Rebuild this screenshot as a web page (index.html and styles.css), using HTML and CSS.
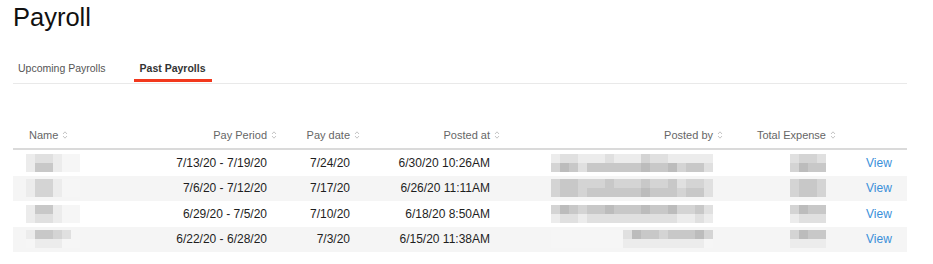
FILE: index.html
```html
<!DOCTYPE html>
<html lang="en">
<head>
<meta charset="utf-8">
<title>Payroll</title>
<link rel="stylesheet" href="styles.css">
</head>
<body>
<div class="page">
  <h1 class="title">Payroll</h1>
  <div class="tabs">
    <div class="tab">Upcoming Payrolls</div>
    <div class="tab active">Past Payrolls</div>
  </div>
  <table class="grid">
    <colgroup>
      <col class="c1"><col class="c2"><col class="c3"><col class="c4"><col class="c5"><col class="c6"><col class="c7">
    </colgroup>
    <thead>
      <tr>
        <th class="left">Name<svg class="sort" viewBox="0 0 6 10"><path d="M1 4 L3 1.8 L5 4 M1 6 L3 8.2 L5 6"/></svg></th>
        <th>Pay Period<svg class="sort" viewBox="0 0 6 10"><path d="M1 4 L3 1.8 L5 4 M1 6 L3 8.2 L5 6"/></svg></th>
        <th>Pay date<svg class="sort" viewBox="0 0 6 10"><path d="M1 4 L3 1.8 L5 4 M1 6 L3 8.2 L5 6"/></svg></th>
        <th>Posted at<svg class="sort" viewBox="0 0 6 10"><path d="M1 4 L3 1.8 L5 4 M1 6 L3 8.2 L5 6"/></svg></th>
        <th>Posted by<svg class="sort" viewBox="0 0 6 10"><path d="M1 4 L3 1.8 L5 4 M1 6 L3 8.2 L5 6"/></svg></th>
        <th>Total Expense<svg class="sort" viewBox="0 0 6 10"><path d="M1 4 L3 1.8 L5 4 M1 6 L3 8.2 L5 6"/></svg></th>
        <th class="blank"></th>
      </tr>
    </thead>
    <tbody>
      <tr>
        <td class="name"><div class="mosaic"><div class="mrow"><i class="g1"></i><i class="g2"></i><i class="g2"></i><i class="g1"></i><i class="g0"></i><i class="g0"></i></div><div class="mrow"><i class="g1"></i><i class="g4"></i><i class="g4"></i><i class="g1"></i><i class="g0"></i><i class="g0"></i></div></div></td>
        <td>7/13/20 - 7/19/20</td>
        <td>7/24/20</td>
        <td>6/30/20 10:26AM</td>
        <td class="blur"><div class="mosaic"><div class="mrow"><i class="g1"></i><i class="g2"></i><i class="g2"></i><i class="g1"></i><i class="g1"></i><i class="g1"></i><i class="g2"></i><i class="g1"></i><i class="g1"></i><i class="g1"></i><i class="g3"></i><i class="g2"></i><i class="g2"></i><i class="g1"></i><i class="g1"></i><i class="g1"></i><i class="g1"></i><i class="g1"></i></div><div class="mrow"><i class="g3"></i><i class="g5"></i><i class="g4"></i><i class="g2"></i><i class="g4"></i><i class="g4"></i><i class="g4"></i><i class="g4"></i><i class="g4"></i><i class="g4"></i><i class="g5"></i><i class="g4"></i><i class="g4"></i><i class="g5"></i><i class="g3"></i><i class="g4"></i><i class="g4"></i><i class="g2"></i></div></div></td>
        <td class="blur"><div class="mosaic"><div class="mrow"><i class="g2"></i><i class="g3"></i><i class="g3"></i><i class="g2"></i></div><div class="mrow"><i class="g3"></i><i class="g5"></i><i class="g4"></i><i class="g4"></i></div></div></td>
        <td class="view"><a href="#">View</a></td>
      </tr>
      <tr>
        <td class="name"><div class="mosaic"><div class="mrow"><i class="g1"></i><i class="g3"></i><i class="g3"></i><i class="g1"></i><i class="g0"></i><i class="g0"></i></div><div class="mrow"><i class="g1"></i><i class="g3"></i><i class="g3"></i><i class="g1"></i><i class="g0"></i><i class="g0"></i></div></div></td>
        <td>7/6/20 - 7/12/20</td>
        <td>7/17/20</td>
        <td>6/26/20 11:11AM</td>
        <td class="blur"><div class="mosaic"><div class="mrow"><i class="g3"></i><i class="g4"></i><i class="g4"></i><i class="g3"></i><i class="g3"></i><i class="g3"></i><i class="g4"></i><i class="g3"></i><i class="g3"></i><i class="g3"></i><i class="g4"></i><i class="g3"></i><i class="g3"></i><i class="g4"></i><i class="g2"></i><i class="g3"></i><i class="g3"></i><i class="g2"></i></div><div class="mrow"><i class="g3"></i><i class="g4"></i><i class="g4"></i><i class="g3"></i><i class="g4"></i><i class="g4"></i><i class="g4"></i><i class="g4"></i><i class="g4"></i><i class="g4"></i><i class="g5"></i><i class="g4"></i><i class="g4"></i><i class="g4"></i><i class="g3"></i><i class="g4"></i><i class="g4"></i><i class="g2"></i></div></div></td>
        <td class="blur"><div class="mosaic"><div class="mrow"><i class="g3"></i><i class="g4"></i><i class="g4"></i><i class="g3"></i></div><div class="mrow"><i class="g3"></i><i class="g4"></i><i class="g4"></i><i class="g3"></i></div></div></td>
        <td class="view"><a href="#">View</a></td>
      </tr>
      <tr>
        <td class="name"><div class="mosaic"><div class="mrow"><i class="g1"></i><i class="g4"></i><i class="g4"></i><i class="g1"></i><i class="g0"></i><i class="g0"></i></div><div class="mrow"><i class="g1"></i><i class="g2"></i><i class="g2"></i><i class="g1"></i><i class="g0"></i><i class="g0"></i></div></div></td>
        <td>6/29/20 - 7/5/20</td>
        <td>7/10/20</td>
        <td>6/18/20 8:50AM</td>
        <td class="blur"><div class="mosaic"><div class="mrow"><i class="g3"></i><i class="g5"></i><i class="g4"></i><i class="g3"></i><i class="g4"></i><i class="g4"></i><i class="g5"></i><i class="g4"></i><i class="g4"></i><i class="g4"></i><i class="g5"></i><i class="g4"></i><i class="g4"></i><i class="g5"></i><i class="g3"></i><i class="g3"></i><i class="g4"></i><i class="g2"></i></div><div class="mrow"><i class="g1"></i><i class="g2"></i><i class="g2"></i><i class="g1"></i><i class="g2"></i><i class="g2"></i><i class="g2"></i><i class="g2"></i><i class="g2"></i><i class="g2"></i><i class="g2"></i><i class="g2"></i><i class="g2"></i><i class="g2"></i><i class="g1"></i><i class="g1"></i><i class="g2"></i><i class="g1"></i></div></div></td>
        <td class="blur"><div class="mosaic"><div class="mrow"><i class="g3"></i><i class="g5"></i><i class="g4"></i><i class="g4"></i></div><div class="mrow"><i class="g1"></i><i class="g2"></i><i class="g2"></i><i class="g2"></i></div></div></td>
        <td class="view"><a href="#">View</a></td>
      </tr>
      <tr>
        <td class="name"><div class="mosaic"><div class="mrow"><i class="g1"></i><i class="g4"></i><i class="g4"></i><i class="g3"></i><i class="g2"></i><i class="g0"></i></div><div class="mrow"><i class="g0"></i><i class="g1"></i><i class="g1"></i><i class="g1"></i><i class="g0"></i><i class="g0"></i></div></div></td>
        <td>6/22/20 - 6/28/20</td>
        <td>7/3/20</td>
        <td>6/15/20 11:38AM</td>
        <td class="blur"><div class="mosaic"><div class="mrow"><i class="g0"></i><i class="g0"></i><i class="g0"></i><i class="g0"></i><i class="g0"></i><i class="g0"></i><i class="g0"></i><i class="g0"></i><i class="g2"></i><i class="g5"></i><i class="g4"></i><i class="g4"></i><i class="g3"></i><i class="g4"></i><i class="g4"></i><i class="g4"></i><i class="g5"></i><i class="g3"></i></div><div class="mrow"><i class="g0"></i><i class="g0"></i><i class="g0"></i><i class="g0"></i><i class="g0"></i><i class="g0"></i><i class="g0"></i><i class="g0"></i><i class="g1"></i><i class="g1"></i><i class="g1"></i><i class="g1"></i><i class="g1"></i><i class="g1"></i><i class="g1"></i><i class="g1"></i><i class="g1"></i><i class="g0"></i></div></div></td>
        <td class="blur"><div class="mosaic"><div class="mrow"><i class="g3"></i><i class="g5"></i><i class="g4"></i><i class="g4"></i></div><div class="mrow"><i class="g1"></i><i class="g1"></i><i class="g1"></i><i class="g1"></i></div></div></td>
        <td class="view"><a href="#">View</a></td>
      </tr>
    </tbody>
  </table>
</div>
</body>
</html>
```
FILE: styles.css
```css
html, body {
  margin: 0;
  padding: 0;
  background: #ffffff;
}
body {
  font-family: "Liberation Sans", Arial, Helvetica, sans-serif;
  color: #222222;
}
.page {
  padding: 0 26px 0 13px;
  width: 894px;
}
.title {
  margin: 0;
  padding-top: 1px;
  font-size: 25.5px;
  line-height: 32px;
  font-weight: 400;
  color: #111111;
}
.tabs {
  display: flex;
  gap: 22px;
  margin-top: 28px;
  border-bottom: 1px solid #e9e9e9;
}
.tab {
  padding: 0 6px 4px;
  font-size: 10.5px;
  line-height: 14px;
  color: #555555;
  border-bottom: 3px solid transparent;
  margin-bottom: 1px;
}
.tab:first-child {
  margin-left: -1px;
}
.tab.active {
  font-weight: 700;
  color: #333333;
  border-bottom-color: #f2381d;
}
.grid {
  width: 894px;
  margin-top: 38px;
  border-collapse: collapse;
  table-layout: fixed;
}
.c1 { width: 137px; }
.c2 { width: 132px; }
.c3 { width: 83px; }
.c4 { width: 140px; }
.c5 { width: 223px; }
.c6 { width: 113px; }
.c7 { width: 66px; }
.grid th {
  height: 26px;
  padding: 0 5px 0 0;
  text-align: right;
  font-size: 11px;
  font-weight: 400;
  color: #666666;
  white-space: nowrap;
  border-bottom: 2px solid #dadada;
}
.grid th.left {
  text-align: left;
  padding-left: 16px;
}
.sort {
  width: 6px;
  height: 10px;
  margin-left: 4px;
  vertical-align: -1px;
  fill: none;
  stroke: #bdbdbd;
  stroke-width: 0.9;
}
.grid td {
  height: 25.5px;
  padding: 0 15px 0 0;
  text-align: right;
  font-size: 12px;
  color: #1e1e1e;
  white-space: nowrap;
}
.grid tbody tr:nth-child(even) td {
  background: #f5f5f5;
}
.grid td.name {
  padding-left: 13px;
  text-align: left;
}
.grid td.blur .mosaic {
  margin-left: auto;
}
.grid td.view {
  padding: 0 0 0 25px;
  text-align: left;
}
.view a {
  color: #3a8fd9;
  text-decoration: none;
}
.mosaic {
  display: flex;
  flex-direction: column;
  width: max-content;
}
.mrow {
  display: flex;
}
.mrow i {
  display: block;
  width: 9px;
  height: 9px;
}
.g0 { background: #f6f6f6; }
.g1 { background: #ececec; }
.g2 { background: #e0e0e0; }
.g3 { background: #d4d4d4; }
.g4 { background: #c8c8c8; }
.g5 { background: #bcbcbc; }
```
